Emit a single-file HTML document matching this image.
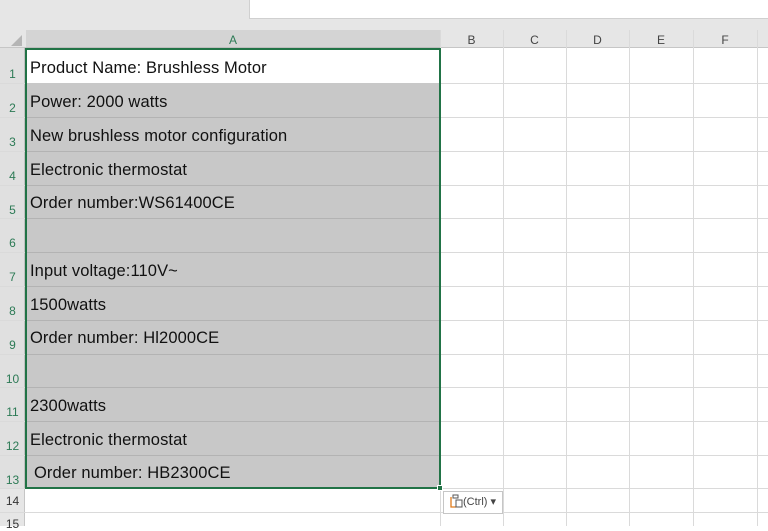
<!DOCTYPE html>
<html><head><meta charset="utf-8"><style>
*{margin:0;padding:0;box-sizing:border-box}
body{width:768px;height:526px;overflow:hidden;background:#fff;position:relative;font-family:"Liberation Sans",sans-serif}
.a{position:absolute}
.hl{position:absolute;left:0;width:768px;height:1px;background:#dadada}
.gl{position:absolute;left:26px;width:414px;height:1px;background:#b3b3b3}
.vl{position:absolute;top:30px;width:1px;height:496px;background:#dadada}
.ch{position:absolute;top:30px;height:18px;font-size:12px;color:#444;text-align:center;line-height:20px}
.rn{position:absolute;left:0;width:25px;font-size:12px;color:#2c7a55;text-align:center}
.t{position:absolute;left:30px;font-size:16.5px;color:#111;white-space:nowrap;letter-spacing:0.1px}
</style></head><body>
<div class="a" style="left:0;top:0;width:768px;height:30px;background:#e6e6e6"></div>
<div class="a" style="left:249px;top:0;width:519px;height:19px;background:#fff;border-left:1px solid #d0d0d0;border-bottom:1px solid #d0d0d0"></div>
<div class="a" style="left:0;top:30px;width:768px;height:18px;background:#e6e6e6;border-bottom:1px solid #c6c6c6"></div>
<div class="a" style="left:26px;top:30px;width:414px;height:18px;background:#d4d4d4;border-bottom:1px solid #bdbdbd"></div>
<div class="a" style="left:0;top:48px;width:25px;height:478px;background:#e6e6e6;border-right:1px solid #c6c6c6"></div>
<div class="a" style="left:0;top:48px;width:25px;height:440px;background:#e0e0e0;border-right:1px solid #c0c0c0"></div>
<svg class="a" style="left:10px;top:34px" width="13" height="13"><polygon points="12,1 12,12 1,12" fill="#b5b5b5"/></svg>
<div class="ch" style="left:26px;width:414px;color:#2c7a55">A</div>
<div class="ch" style="left:440px;width:63px">B</div>
<div class="ch" style="left:503px;width:63px">C</div>
<div class="ch" style="left:566px;width:63px">D</div>
<div class="ch" style="left:629px;width:64px">E</div>
<div class="ch" style="left:693px;width:64px">F</div>
<div class="hl" style="top:83px"></div><div class="hl" style="top:117px"></div><div class="hl" style="top:151px"></div><div class="hl" style="top:185px"></div><div class="hl" style="top:218px"></div><div class="hl" style="top:252px"></div><div class="hl" style="top:286px"></div><div class="hl" style="top:320px"></div><div class="hl" style="top:354px"></div><div class="hl" style="top:387px"></div><div class="hl" style="top:421px"></div><div class="hl" style="top:455px"></div><div class="hl" style="top:488px"></div><div class="hl" style="top:512px"></div>
<div class="a" style="left:26px;top:83px;width:414px;height:405px;background:#c8c8c8"></div>
<div class="gl" style="top:117px"></div><div class="gl" style="top:151px"></div><div class="gl" style="top:185px"></div><div class="gl" style="top:218px"></div><div class="gl" style="top:252px"></div><div class="gl" style="top:286px"></div><div class="gl" style="top:320px"></div><div class="gl" style="top:354px"></div><div class="gl" style="top:387px"></div><div class="gl" style="top:421px"></div><div class="gl" style="top:455px"></div>
<div class="vl" style="left:503px"></div><div class="vl" style="left:566px"></div><div class="vl" style="left:629px"></div><div class="vl" style="left:693px"></div><div class="vl" style="left:757px"></div><div class="vl" style="left:440px"></div>
<div class="rn" style="top:67px">1</div><div class="rn" style="top:101px">2</div><div class="rn" style="top:135px">3</div><div class="rn" style="top:169px">4</div><div class="rn" style="top:203px">5</div><div class="rn" style="top:236px">6</div><div class="rn" style="top:270px">7</div><div class="rn" style="top:304px">8</div><div class="rn" style="top:338px">9</div><div class="rn" style="top:372px">10</div><div class="rn" style="top:405px">11</div><div class="rn" style="top:439px">12</div><div class="rn" style="top:473px">13</div><div class="rn" style="top:494px;color:#333">14</div><div class="rn" style="top:517px;color:#333">15</div>
<div class="t" style="top:59px">Product Name: Brushless Motor</div>
<div class="t" style="top:93px">Power: 2000 watts</div>
<div class="t" style="top:127px">New brushless motor configuration</div>
<div class="t" style="top:161px">Electronic thermostat</div>
<div class="t" style="top:194px">Order number:WS61400CE</div>
<div class="t" style="top:262px">Input voltage:110V~</div>
<div class="t" style="top:296px">1500watts</div>
<div class="t" style="top:329px">Order number: Hl2000CE</div>
<div class="t" style="top:397px">2300watts</div>
<div class="t" style="top:431px">Electronic thermostat</div>
<div class="t" style="top:464px;left:34px">Order number: HB2300CE</div>
<div class="a" style="left:25px;top:48px;width:416px;height:441px;border:2px solid #217346"></div>
<div class="a" style="left:437px;top:485px;width:6px;height:6px;background:#217346;border:1px solid #fff"></div>
<div class="a" style="left:443px;top:491px;width:60px;height:23px;background:#fff;border:1px solid #c6c6c6;font-size:11px;color:#444;line-height:21px;padding-left:5px">
<svg width="14" height="14" style="vertical-align:-3px"><path d="M2 3v10h5" stroke="#e07b1a" fill="none" stroke-width="1.3"/><rect x="4" y="1" width="5" height="3" fill="none" stroke="#555"/><rect x="7" y="6" width="6" height="7" fill="#fff" stroke="#555"/></svg>(Ctrl) ▾</div>
</body></html>
